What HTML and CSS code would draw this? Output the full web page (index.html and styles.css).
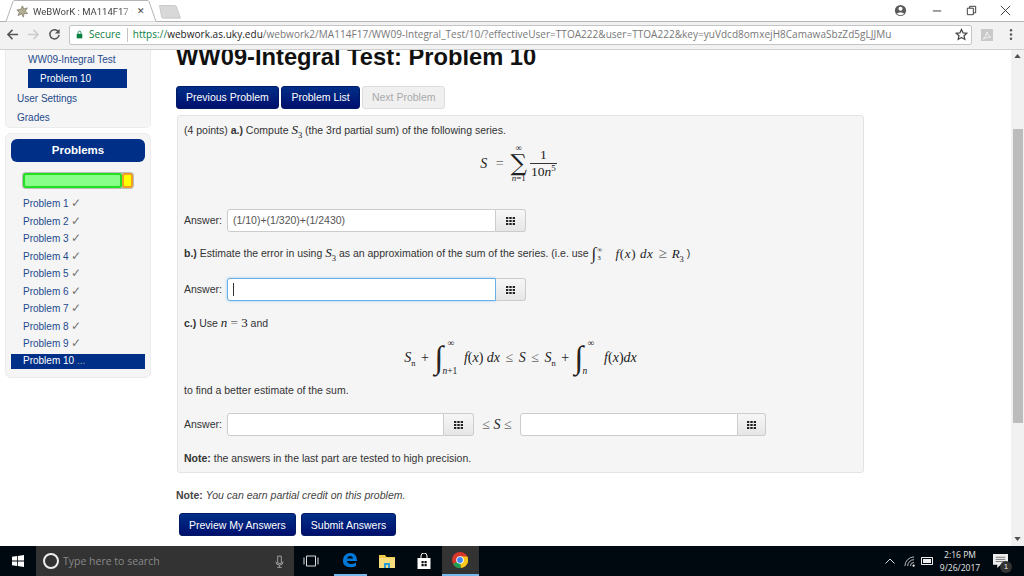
FILE: index.html
```html
<!DOCTYPE html>
<html lang="en">
  <head>
    <meta charset="UTF-8" />
    <title>WeBWorK : MA114F17</title>
    <link rel="stylesheet" href="styles.css">
  </head>
  <body>
    <div class="tabstrip">
      <div class="tab">
        <svg class="tab-shape" viewBox="0 0 152 22"><path d="M0 21.500h1L8 1.500Q8.500 .5 10 .5h132q1.500 0 2 1L151 21.500h1" fill="#fff" stroke="#b4b4b4"/></svg>
        <svg class="favicon" viewBox="0 0 16 16"><path d="M8 1l1.500 4 4.500-1.500-2.500 4 3 3-4.500 0L9 15 7 11l-4.500 2L4 9 1 6l4.500-.5z" fill="#b3ad94" stroke="#77735f" stroke-width=".8"/></svg>
        <span class="tab-title">WeBWorK : MA114F17 : V</span>
        <span class="tab-close">&#10005;</span>
      </div>
      <svg class="newtab" viewBox="0 0 26 16"><path d="M1 .5h17q1.500 0 2 1l5 13.500H5q-1 0-1.500-1z" fill="#d8d8d8" stroke="#c4c4c4"/></svg>
      <div class="window-btns">
        <svg class="win-icon" viewBox="0 0 14 14"><circle cx="7" cy="7" r="6" fill="#5a5a5a"/><circle cx="7" cy="5.200" r="2.200" fill="#fff"/><path d="M2.800 10.500q4.200-3.500 8.400 0-4.200 3-8.400 0z" fill="#fff"/></svg>
        <svg class="win-icon min" viewBox="0 0 14 14"><path d="M2 7.500h9" stroke="#333" fill="none"/></svg>
        <svg class="win-icon max" viewBox="0 0 14 14"><path d="M2.500 4.500h6.500v7H2.500zM5 4.500V2.500h6.500v7H9" stroke="#333" fill="none"/></svg>
        <svg class="win-icon close" viewBox="0 0 14 14"><path d="M2 2l10 10M12 2L2 12" stroke="#333" fill="none"/></svg>
      </div>
    </div>

    <div class="toolbar">
      <svg class="nav-icon" viewBox="0 0 14 14"><path d="M13 7H2M7 2L2 7l5 5" stroke="#555" stroke-width="1.600" fill="none"/></svg>
      <svg class="nav-icon" viewBox="0 0 14 14"><path d="M1 7h11M7 2l5 5-5 5" stroke="#ccc" stroke-width="1.600" fill="none"/></svg>
      <svg class="nav-icon" viewBox="0 0 14 14"><path d="M11.500 4.500A5 5 0 1 0 12 7.500" stroke="#555" stroke-width="1.600" fill="none"/><path d="M12.500 1v5h-5z" fill="#555"/></svg>
      <div class="omnibox">
        <svg class="lock" viewBox="0 0 10 12"><path d="M1 5h8v6.500H1z" fill="#0b8043"/><path d="M3 5V3.200a2 2 0 0 1 4 0V5" stroke="#0b8043" stroke-width="1.200" fill="none"/></svg>
        <span class="secure">Secure</span>
        <span class="omni-sep"></span>
        <span class="url"><span class="url-scheme">https://</span><span class="url-host">webwork.as.uky.edu</span>/webwork2/MA114F17/WW09-Integral_Test/10/?effectiveUser=TTOA222&amp;user=TTOA222&amp;key=yuVdcd8omxejH8CamawaSbzZd5gLJJMu</span>
        <svg class="star" viewBox="0 0 14 14"><path d="M7 1.500l1.700 3.700 4 .4-3 2.700.9 4L7 10.300l-3.600 2 .9-4-3-2.700 4-.4z" stroke="#444" stroke-width="1.300" fill="none"/></svg>
      </div>
      <span class="ext"><svg viewBox="0 0 12 12"><path d="M2 10q3-2 4-7 .5 4 4 5-4 0-8 2z" stroke="#f0f0f0" fill="none"/></svg></span>
      <svg class="menu-dots" viewBox="0 0 4 14"><circle cx="2" cy="2.500" r="1.300"/><circle cx="2" cy="7" r="1.300"/><circle cx="2" cy="11.500" r="1.300"/></svg>
    </div>

    <div class="viewport">
      <div class="page">
        <aside class="sidebar">
          <div class="panel nav-panel">
            <a class="nav-set">WW09-Integral Test</a>
            <a class="nav-current">Problem 10</a>
            <a class="nav-link">User Settings</a>
            <a class="nav-link">Grades</a>
          </div>
          <div class="panel problems-panel">
            <div class="problems-head">Problems</div>
            <div class="progress"><span class="progress-ok"></span><span class="progress-part"></span></div>
            <ul class="problem-list">
              <li>Problem 1 <span class="tick">&#10003;</span></li>
              <li>Problem 2 <span class="tick">&#10003;</span></li>
              <li>Problem 3 <span class="tick">&#10003;</span></li>
              <li>Problem 4 <span class="tick">&#10003;</span></li>
              <li>Problem 5 <span class="tick">&#10003;</span></li>
              <li>Problem 6 <span class="tick">&#10003;</span></li>
              <li>Problem 7 <span class="tick">&#10003;</span></li>
              <li>Problem 8 <span class="tick">&#10003;</span></li>
              <li>Problem 9 <span class="tick">&#10003;</span></li>
              <li class="active">Problem 10 <span class="tick">...</span></li>
            </ul>
          </div>
        </aside>

        <main class="content">
          <h1 class="title">WW09-Integral Test: Problem 10</h1>
          <div class="nav-btns">
            <button class="btn">Previous Problem</button>
            <button class="btn">Problem List</button>
            <button class="btn btn-off">Next Problem</button>
          </div>

          <div class="problem">
            <p class="line-a">(4 points) <b>a.)</b> Compute <i class="m">S<sub>3</sub></i> (the 3rd partial sum) of the following series.</p>
            <div class="eq eq-sum">
              <span class="m eq-lhs"><i>S</i> <span class="op">=</span></span>
              <span class="sum"><small>&infin;</small><em>&sum;</em><small><i>n</i>=1</small></span>
              <span class="frac"><span>1</span><span class="den">10<i>n</i><sup>5</sup></span></span>
            </div>
            <div class="answer answer-a">
              <span class="answer-label">Answer:</span>
              <span class="input wide">(1/10)+(1/320)+(1/2430)</span>
              <span class="grid-btn"><svg class="grid-icon" viewBox="0 0 9 8"><path d="M0 0h2.300v2H0zM3.300 0h2.400v2H3.300zM6.700 0H9v2H6.700zM0 3h2.300v2H0zM3.300 3h2.400v2H3.300zM6.700 3H9v2H6.700zM0 6h2.300v2H0zM3.300 6h2.400v2H3.300zM6.700 6H9v2H6.700z"/></svg></span>
            </div>
            <p class="line-b"><b>b.)</b> Estimate the error in using <i class="m">S<sub>3</sub></i> as an approximation of the sum of the series. (i.e. use <span class="m inline-int"><span class="int-small"><em>&int;</em><span class="limits"><small>&infin;</small><small>3</small></span></span><span class="fx"><i>f</i>(<i>x</i>) <i>dx</i></span><span class="op">&ge;</span><span><i>R</i><sub>3</sub></span></span> )</p>
            <div class="answer answer-b">
              <span class="answer-label">Answer:</span>
              <span class="input wide focus"><span class="caret"></span></span>
              <span class="grid-btn"><svg class="grid-icon" viewBox="0 0 9 8"><path d="M0 0h2.300v2H0zM3.300 0h2.400v2H3.300zM6.700 0H9v2H6.700zM0 3h2.300v2H0zM3.300 3h2.400v2H3.300zM6.700 3H9v2H6.700zM0 6h2.300v2H0zM3.300 6h2.400v2H3.300zM6.700 6H9v2H6.700z"/></svg></span>
            </div>
            <p class="line-c"><b>c.)</b> Use <span class="m"><i>n</i> <span class="op">=</span> 3</span> and</p>
            <div class="eq eq-int m">
              <i>S<sub>n</sub></i>
              <span>+</span>
              <span class="int"><em>&int;</em><small class="up">&infin;</small><small class="down"><i>n</i>+1</small></span>
              <span><i>f</i>(<i>x</i>) <i>dx</i></span>
              <span class="op">&le;</span>
              <i>S</i>
              <span class="op">&le;</span>
              <i>S<sub>n</sub></i>
              <span>+</span>
              <span class="int"><em>&int;</em><small class="up">&infin;</small><small class="down"><i>n</i></small></span>
              <span><i>f</i>(<i>x</i>)<i>dx</i></span>
            </div>
            <p class="line-d">to find a better estimate of the sum.</p>
            <div class="answer answer-c">
              <span class="answer-label">Answer:</span>
              <span class="input narrow"></span>
              <span class="grid-btn"><svg class="grid-icon" viewBox="0 0 9 8"><path d="M0 0h2.300v2H0zM3.300 0h2.400v2H3.300zM6.700 0H9v2H6.700zM0 3h2.300v2H0zM3.300 3h2.400v2H3.300zM6.700 3H9v2H6.700zM0 6h2.300v2H0zM3.300 6h2.400v2H3.300zM6.700 6H9v2H6.700z"/></svg></span>
              <span class="between m"><span class="op">&le;</span> <i>S</i> <span class="op">&le;</span></span>
              <span class="input narrow last"></span>
              <span class="grid-btn last"><svg class="grid-icon" viewBox="0 0 9 8"><path d="M0 0h2.300v2H0zM3.300 0h2.400v2H3.300zM6.700 0H9v2H6.700zM0 3h2.300v2H0zM3.300 3h2.400v2H3.300zM6.700 3H9v2H6.700zM0 6h2.300v2H0zM3.300 6h2.400v2H3.300zM6.700 6H9v2H6.700z"/></svg></span>
            </div>
            <p class="line-e"><b>Note:</b> the answers in the last part are tested to high precision.</p>
          </div>

          <p class="credit"><b>Note:</b> <i>You can earn partial credit on this problem.</i></p>
          <div class="submit-btns">
            <button class="btn">Preview My Answers</button>
            <button class="btn">Submit Answers</button>
          </div>
        </main>
      </div>
      <div class="scrollbar">
        <svg class="arrow" viewBox="0 0 8 5"><path d="M4 0l4 5H0z"/></svg>
        <div class="thumb"></div>
        <svg class="arrow" viewBox="0 0 8 5"><path d="M0 0h8L4 5z"/></svg>
      </div>
    </div>

    <footer class="taskbar">
      <span class="start"><svg viewBox="0 0 12 12"><path d="M0 1.700L5 1v4.600H0zM5.800.9L12 0v5.600H5.800zM0 6.400h5V11l-5-.7zM5.800 6.400H12V12l-6.200-.9z" fill="#fff"/></svg></span>
      <div class="search">
        <span class="cortana"></span>
        <span class="search-text">Type here to search</span>
        <svg class="mic" viewBox="0 0 10 14"><path d="M3 1h4v8H3zM1 7q0 4 4 4t4-4M5 11v2M2.500 13.500h5" stroke="#aaa" fill="none"/></svg>
      </div>
      <svg class="task-view" viewBox="0 0 16 12"><path d="M3.500 1h9v10h-9zM1 2.500v7M15 2.500v7" stroke="#ddd" fill="none"/></svg>
      <span class="task open"><svg viewBox="0 0 16 16"><path d="M1 9C1 3 5 1 8.500 1 13 1 15 4.500 15 9H5q.3 3 4 3 3 0 5-1.500V14q-2 1.200-5.500 1.200C4 15.200 1 13 1 9zM5 6.500h6Q10.800 4 8 4 5.500 4 5 6.500z" fill="#0078d7"/></svg></span>
      <span class="task"><svg viewBox="0 0 16 14"><path d="M0 1h6l1.500 2H16v3H0z" fill="#f2c94c"/><path d="M0 4h16v10H0z" fill="#f7dc7e"/><path d="M5 14V9h6v5h-2v-3H7v3z" fill="#2d9cdb"/></svg></span>
      <span class="task"><svg viewBox="0 0 16 16"><path d="M1.500 5h13v11h-13z" fill="#fff"/><path d="M5 5V3a3 3 0 0 1 6 0v2" stroke="#fff" fill="none"/><path d="M5.500 8h2.200v2.200H5.500zM8.500 8h2.200v2.200H8.500zM5.500 11h2.200v2.200H5.500zM8.500 11h2.200v2.200H8.500z" fill="#111"/></svg></span>
      <span class="task running"><svg viewBox="0 0 16 16"><circle cx="8" cy="8" r="8" fill="#d9372b"/><path d="M8 8L1 12A8 8 0 0 0 9 16z" fill="#1e9e50"/><path d="M8 4.500h7.300A8 8 0 0 1 9 16l-1-8z" fill="#f8c81c"/><circle cx="8" cy="8" r="3.800" fill="#fff"/><circle cx="8" cy="8" r="2.900" fill="#4285f4"/></svg></span>
      <div class="tray">
        <svg class="tray-icon chevron" viewBox="0 0 10 6"><path d="M.5 5.500L5 1l4.500 4.500" stroke="#ddd" fill="none"/></svg>
        <svg class="tray-icon wifi" viewBox="0 0 12 12"><path d="M1 11A10 10 0 0 1 11 1M4 11a7 7 0 0 1 7-7M7 11a4 4 0 0 1 4-4" stroke="#ccc" fill="none"/><circle cx="10.500" cy="10.500" r="1.200" fill="#fff"/></svg>
        <svg class="tray-icon battery" viewBox="0 0 12 8"><path d="M.5.500h11v7H.5z" stroke="#eee" fill="none"/><path d="M2 2h8v4H2z" fill="#eee"/></svg>
        <div class="clock"><span>2:16 PM</span><span>9/26/2017</span></div>
        <span class="notify">
          <svg viewBox="0 0 14 13"><path d="M0 0h14v10H7l-3 3v-3H0z" fill="#eee"/><path d="M2.500 3h9M2.500 5h9M2.500 7h9" stroke="#555" stroke-width=".7"/></svg>
          <span class="badge">1</span>
        </span>
      </div>
    </footer>
  </body>
</html>
```

FILE: styles.css
```css
/* Reset */
* {
  box-sizing: border-box;
  margin: 0;
  padding: 0;
}
body {
  width: 1024px;
  height: 576px;
  overflow: hidden;
  display: flex;
  flex-direction: column;
  font-family: "Liberation Sans", Arial, sans-serif;
  font-size: 10.5px;
  line-height: 15px;
  color: #333;
  background: #fff;
}
svg {
  display: block;
  flex: none;
}

/* Browser tabs */
.tabstrip {
  height: 22px;
  flex: none;
  display: flex;
  background: linear-gradient(#fff 21px, #b4b4b4 21px);
  padding-left: 5px;
}
.tab {
  position: relative;
  width: 152px;
  height: 22px;
  display: flex;
  align-items: center;
  padding-left: 11px;
}
.tab-shape {
  position: absolute;
  left: 0;
  top: 0;
  width: 152px;
  height: 22px;
}
.favicon {
  position: relative;
  width: 13px;
  height: 13px;
}
.tab-title {
  position: relative;
  width: 101px;
  margin-left: 4px;
  white-space: nowrap;
  overflow: hidden;
  font-family: Roboto, sans-serif;
  font-size: 9.500px;
  color: #444;
  -webkit-mask-image: linear-gradient(90deg, #000 88%, transparent);
  mask-image: linear-gradient(90deg, #000 88%, transparent);
}
.tab-close {
  position: relative;
  font-size: 9px;
  margin-left: 3px;
  color: #444;
}
.newtab {
  width: 26px;
  height: 14px;
  margin-top: 5px;
}
.window-btns {
  margin-left: auto;
  display: flex;
  align-items: center;
  height: 20px;
}
.win-icon {
  width: 13px;
  height: 13px;
}
.min {
  margin-left: 24px;
}
.max {
  margin-left: 21px;
}
.close {
  margin-left: 21px;
  margin-right: 12px;
}

/* Browser toolbar */
.toolbar {
  height: 28px;
  flex: none;
  display: flex;
  align-items: center;
  padding: 0 6px 2px;
  gap: 8px;
  background: #f2f2f2;
  border-bottom: 1px solid #d0d0d0;
}
.nav-icon {
  width: 13px;
  height: 13px;
}
.omnibox {
  width: 903px;
  height: 20px;
  display: flex;
  align-items: center;
  padding-left: 6px;
  background: #fff;
  border: 1px solid #c4c4c4;
  border-radius: 2px;
  font-family: "Open Sans", sans-serif;
  font-size: 10px;
  white-space: nowrap;
}
.lock {
  width: 7px;
  height: 9px;
}
.secure {
  margin-left: 6px;
  color: #0b8043;
}
.omni-sep {
  width: 1px;
  height: 14px;
  margin: 0 5px 0 6px;
  background: #c4c4c4;
}
.url {
  flex: 1;
  color: #777;
  overflow: hidden;
  letter-spacing: 0.035px;
}
.url-scheme {
  color: #0b8043;
}
.url-host {
  color: #222;
}
.star {
  width: 13px;
  height: 13px;
  margin: 0 3px;
}
.ext {
  width: 12px;
  height: 12px;
  margin-left: 1px;
  background: #c9c9c9;
}
.menu-dots {
  width: 4px;
  height: 13px;
  margin-left: 8px;
  fill: #555;
}

/* Page area */
.viewport {
  flex: 1;
  min-height: 0;
  display: flex;
}
.page {
  flex: 1;
  display: flex;
  overflow: hidden;
}
.scrollbar {
  width: 13px;
  display: flex;
  flex-direction: column;
  align-items: center;
  padding-top: 4px;
  background: #f1f1f1;
}
.arrow {
  width: 7px;
  height: 4px;
  fill: #505050;
}
.thumb {
  width: 10px;
  height: 294px;
  margin: 71px 0 auto 1px;
  background: #bcbcbc;
}
.scrollbar .arrow:last-child {
  margin-bottom: 5px;
}

/* Sidebar */
.sidebar {
  width: 151px;
  flex: none;
  margin-left: 5px;
  margin-right: 20px;
  font-size: 10px;
}
.panel {
  width: 146px;
  background: #f5f5f5;
  border: 1px solid #ececec;
}
.nav-panel {
  height: 78px;
  display: flex;
  flex-direction: column;
  border-top: 0;
  border-radius: 0 0 5px 5px;
  padding-top: 2px;
  color: #1d4a8c;
}
.nav-set {
  margin-left: 22px;
  line-height: 15px;
}
.nav-current {
  width: 99px;
  height: 20px;
  margin: 2px 0 1px 22px;
  padding-left: 12px;
  line-height: 19px;
  background: #002f87;
  color: #fff;
}
.nav-link {
  margin-left: 11px;
  height: 19.500px;
  line-height: 19px;
}
.problems-panel {
  height: 245px;
  margin-top: 5px;
  padding: 5px;
  border-radius: 6px;
}
.problems-head {
  height: 23px;
  border-radius: 6px;
  background: #002f87;
  color: #fff;
  font-size: 11.500px;
  font-weight: bold;
  line-height: 23px;
  text-align: center;
}
.progress {
  display: flex;
  width: 112px;
  height: 17px;
  margin: 10px 0 6px 11px;
  padding: 1px;
  border-radius: 4px;
  background: #bbb;
}
.progress-ok {
  width: 99px;
  background: #88ff88;
  border: 2px solid #22e022;
  border-radius: 3px;
}
.progress-part {
  flex: 1;
  background: #ffff00;
  border: 2px solid #f0a020;
  border-radius: 3px;
}
.problem-list {
  list-style: none;
}
.problem-list li {
  height: 17.500px;
  padding-left: 12px;
  line-height: 17px;
  color: #1d4a8c;
}
.problem-list .active {
  height: 15px;
  margin-top: 1px;
  line-height: 14px;
  background: #002f87;
  color: #fff;
}
.tick {
  color: #777;
  font-size: 11.500px;
  line-height: 0;
}
.active .tick {
  color: #aaa;
  font-size: 10px;
}

/* Main column */
.content {
  flex: 1;
  min-width: 0;
}
.title {
  height: 30px;
  margin-bottom: 6px;
  font-size: 23.700px;
  line-height: 15px;
  color: #111;
}
.nav-btns {
  display: flex;
  gap: 2.500px;
  height: 23px;
}
.nav-btns .btn {
  padding-bottom: 2px;
}
.btn {
  height: 23px;
  padding: 0 9px;
  border: 1px solid #001a66;
  border-radius: 3px;
  background: linear-gradient(#002f87, #000f6e);
  color: #fff;
  font: 10.500px "Liberation Sans", sans-serif;
}
.nav-btns .btn-off {
  width: 83px;
  padding-left: 0;
  padding-right: 0;
  background: #f0f0f0;
  border-color: #ddd;
  color: #aaa;
}
.problem {
  width: 687px;
  height: 358px;
  margin: 6px 0 0 1px;
  padding: 7px 6px;
  background: #f5f5f5;
  border: 1px solid #e3e3e3;
  border-radius: 3px;
}

/* Math */
.m {
  font-family: "Liberation Serif", serif;
  font-size: 13px;
  color: #222;
}
p .m {
  line-height: 0;
}
.m sub,
.m sup {
  font-size: 8.500px;
  font-style: normal;
  line-height: 0;
}
.op {
  color: #666;
}
.eq {
  display: flex;
  align-items: center;
  justify-content: center;
}
.eq-sum {
  height: 48px;
  margin-top: 1px;
  padding-right: 4px;
  gap: 3px;
}
.eq-lhs {
  margin-right: 4px;
  font-size: 14px;
  word-spacing: 5px;
}
.sum {
  display: flex;
  flex-direction: column;
  align-items: center;
  font-family: "DejaVu Serif", serif;
  color: #222;
}
.sum small {
  font-size: 9px;
  line-height: 10px;
  font-family: "Liberation Serif", serif;
}
.sum em {
  font-style: normal;
  font-size: 23px;
  line-height: 20px;
}
.frac {
  display: flex;
  flex-direction: column;
  align-items: center;
  font-family: "Liberation Serif", serif;
  font-size: 13.500px;
  line-height: 16px;
  color: #222;
}
.den {
  border-top: 1px solid #333;
  padding: 0 1px;
}
.den sup {
  font-size: 9px;
  line-height: 0;
}
.inline-int {
  display: inline-flex;
  align-items: center;
  gap: 5px;
  height: 15px;
  vertical-align: top;
}
.inline-int > span {
  line-height: 15px;
}
.inline-int .op {
  font-size: 15px;
}
.fx {
  letter-spacing: 0.6px;
}
.int-small {
  display: inline-flex;
  align-items: center;
  width: 19px;
}
.int-small em {
  font-style: normal;
  font-size: 17px;
}
.limits {
  display: flex;
  flex-direction: column;
  margin-left: 1px;
  font-size: 8.500px;
  line-height: 8px;
}
.eq-int {
  height: 40px;
  margin-top: 6px;
  gap: 5.500px;
  font-size: 14px;
}
.int {
  position: relative;
  width: 24px;
  height: 36px;
  display: block;
}
.int em {
  font-style: normal;
  font-size: 32px;
  line-height: 36px;
}
.int small {
  position: absolute;
  font-size: 9.500px;
  line-height: 9px;
}
.int .up {
  top: 0;
  left: 13px;
}
.int .down {
  bottom: -1px;
  left: 8px;
  white-space: nowrap;
}

/* Answers */
.answer {
  display: flex;
  align-items: center;
  height: 23px;
}
.answer-label {
  width: 43px;
  flex: none;
}
.input {
  height: 23px;
  padding-left: 5px;
  background: #fff;
  border: 1px solid #ccc;
  border-radius: 3px 0 0 3px;
  line-height: 21px;
  color: #555;
}
.wide {
  width: 269px;
}
.narrow {
  width: 217px;
}
.input.last {
  width: 218px;
}
.focus {
  border-color: #66afe9;
  box-shadow: 0 0 3px rgba(102, 175, 233, 0.6);
}
.caret {
  display: block;
  width: 1px;
  height: 13px;
  margin-top: 4px;
  background: #333;
}
.grid-btn {
  width: 30px;
  height: 23px;
  display: flex;
  align-items: center;
  justify-content: center;
  background: linear-gradient(#f7f7f7, #e6e6e6);
  border: 1px solid #ccc;
  border-left: 0;
  border-radius: 0 3px 3px 0;
}
.grid-btn.last {
  width: 28px;
}
.grid-icon {
  width: 9px;
  height: 8px;
  fill: #222;
}
.between {
  width: 46px;
  text-align: center;
  font-size: 14px;
}
.line-a {
  height: 15px;
}
.answer-a {
  margin-top: 22px;
}
.line-b {
  margin-top: 14px;
  height: 18px;
}
.answer-b {
  margin-top: 14px;
}
.line-c {
  margin-top: 15px;
}
.line-d {
  margin-top: 6px;
}
.answer-c {
  margin-top: 15px;
}
.line-e {
  margin-top: 15px;
}
.credit {
  margin: 15px 0 0;
  color: #444;
}
.submit-btns {
  display: flex;
  gap: 5px;
  margin: 10px 0 0 3px;
}

/* Windows taskbar */
.taskbar {
  height: 30px;
  flex: none;
  display: flex;
  align-items: stretch;
  background: #00090f;
}
.start {
  width: 36px;
  display: flex;
  align-items: center;
  justify-content: center;
}
.start svg {
  width: 12px;
  height: 12px;
}
.search {
  width: 258px;
  display: flex;
  align-items: center;
  padding-left: 7px;
  background: #333;
}
.cortana {
  width: 16px;
  height: 16px;
  border: 2px solid #eee;
  border-radius: 50%;
}
.search-text {
  margin-left: 4px;
  font-family: "Open Sans", sans-serif;
  font-size: 10.500px;
  color: #888;
}
.mic {
  width: 9px;
  height: 13px;
  margin-left: auto;
  margin-right: 10px;
}
.task-view {
  width: 16px;
  height: 12px;
  align-self: center;
  margin: 0 13px 0 9px;
}
.task {
  width: 36.670px;
  display: flex;
  align-items: center;
  justify-content: center;
}
.task svg {
  width: 16px;
  height: 16px;
}
.open {
  border-bottom: 2px solid #76b9ed;
  border-image: linear-gradient(90deg, transparent 8%, #76b9ed 8%, #76b9ed 92%, transparent 92%) 1;
}
.running {
  background: #333;
  border-bottom: 2px solid #76b9ed;
}
.tray {
  margin-left: auto;
  display: flex;
  align-items: center;
  color: #e6e6e6;
}
.chevron {
  width: 10px;
  height: 6px;
}
.wifi {
  width: 11px;
  height: 11px;
  margin-left: 9px;
}
.battery {
  width: 12px;
  height: 8px;
  margin-left: 6px;
}
.clock {
  width: 52px;
  margin-left: 1px;
  display: flex;
  flex-direction: column;
  align-items: center;
  font-family: "Open Sans", sans-serif;
  font-size: 8.500px;
  line-height: 13px;
}
.notify {
  position: relative;
  width: 38px;
  align-self: stretch;
  padding-right: 10px;
  display: flex;
  align-items: center;
  justify-content: center;
}
.notify svg {
  width: 15px;
  height: 14px;
}
.badge {
  position: absolute;
  left: 14px;
  top: 15px;
  width: 12px;
  height: 12px;
  border-radius: 50%;
  background: #333;
  font-size: 8px;
  line-height: 12px;
  text-align: center;
}
```
